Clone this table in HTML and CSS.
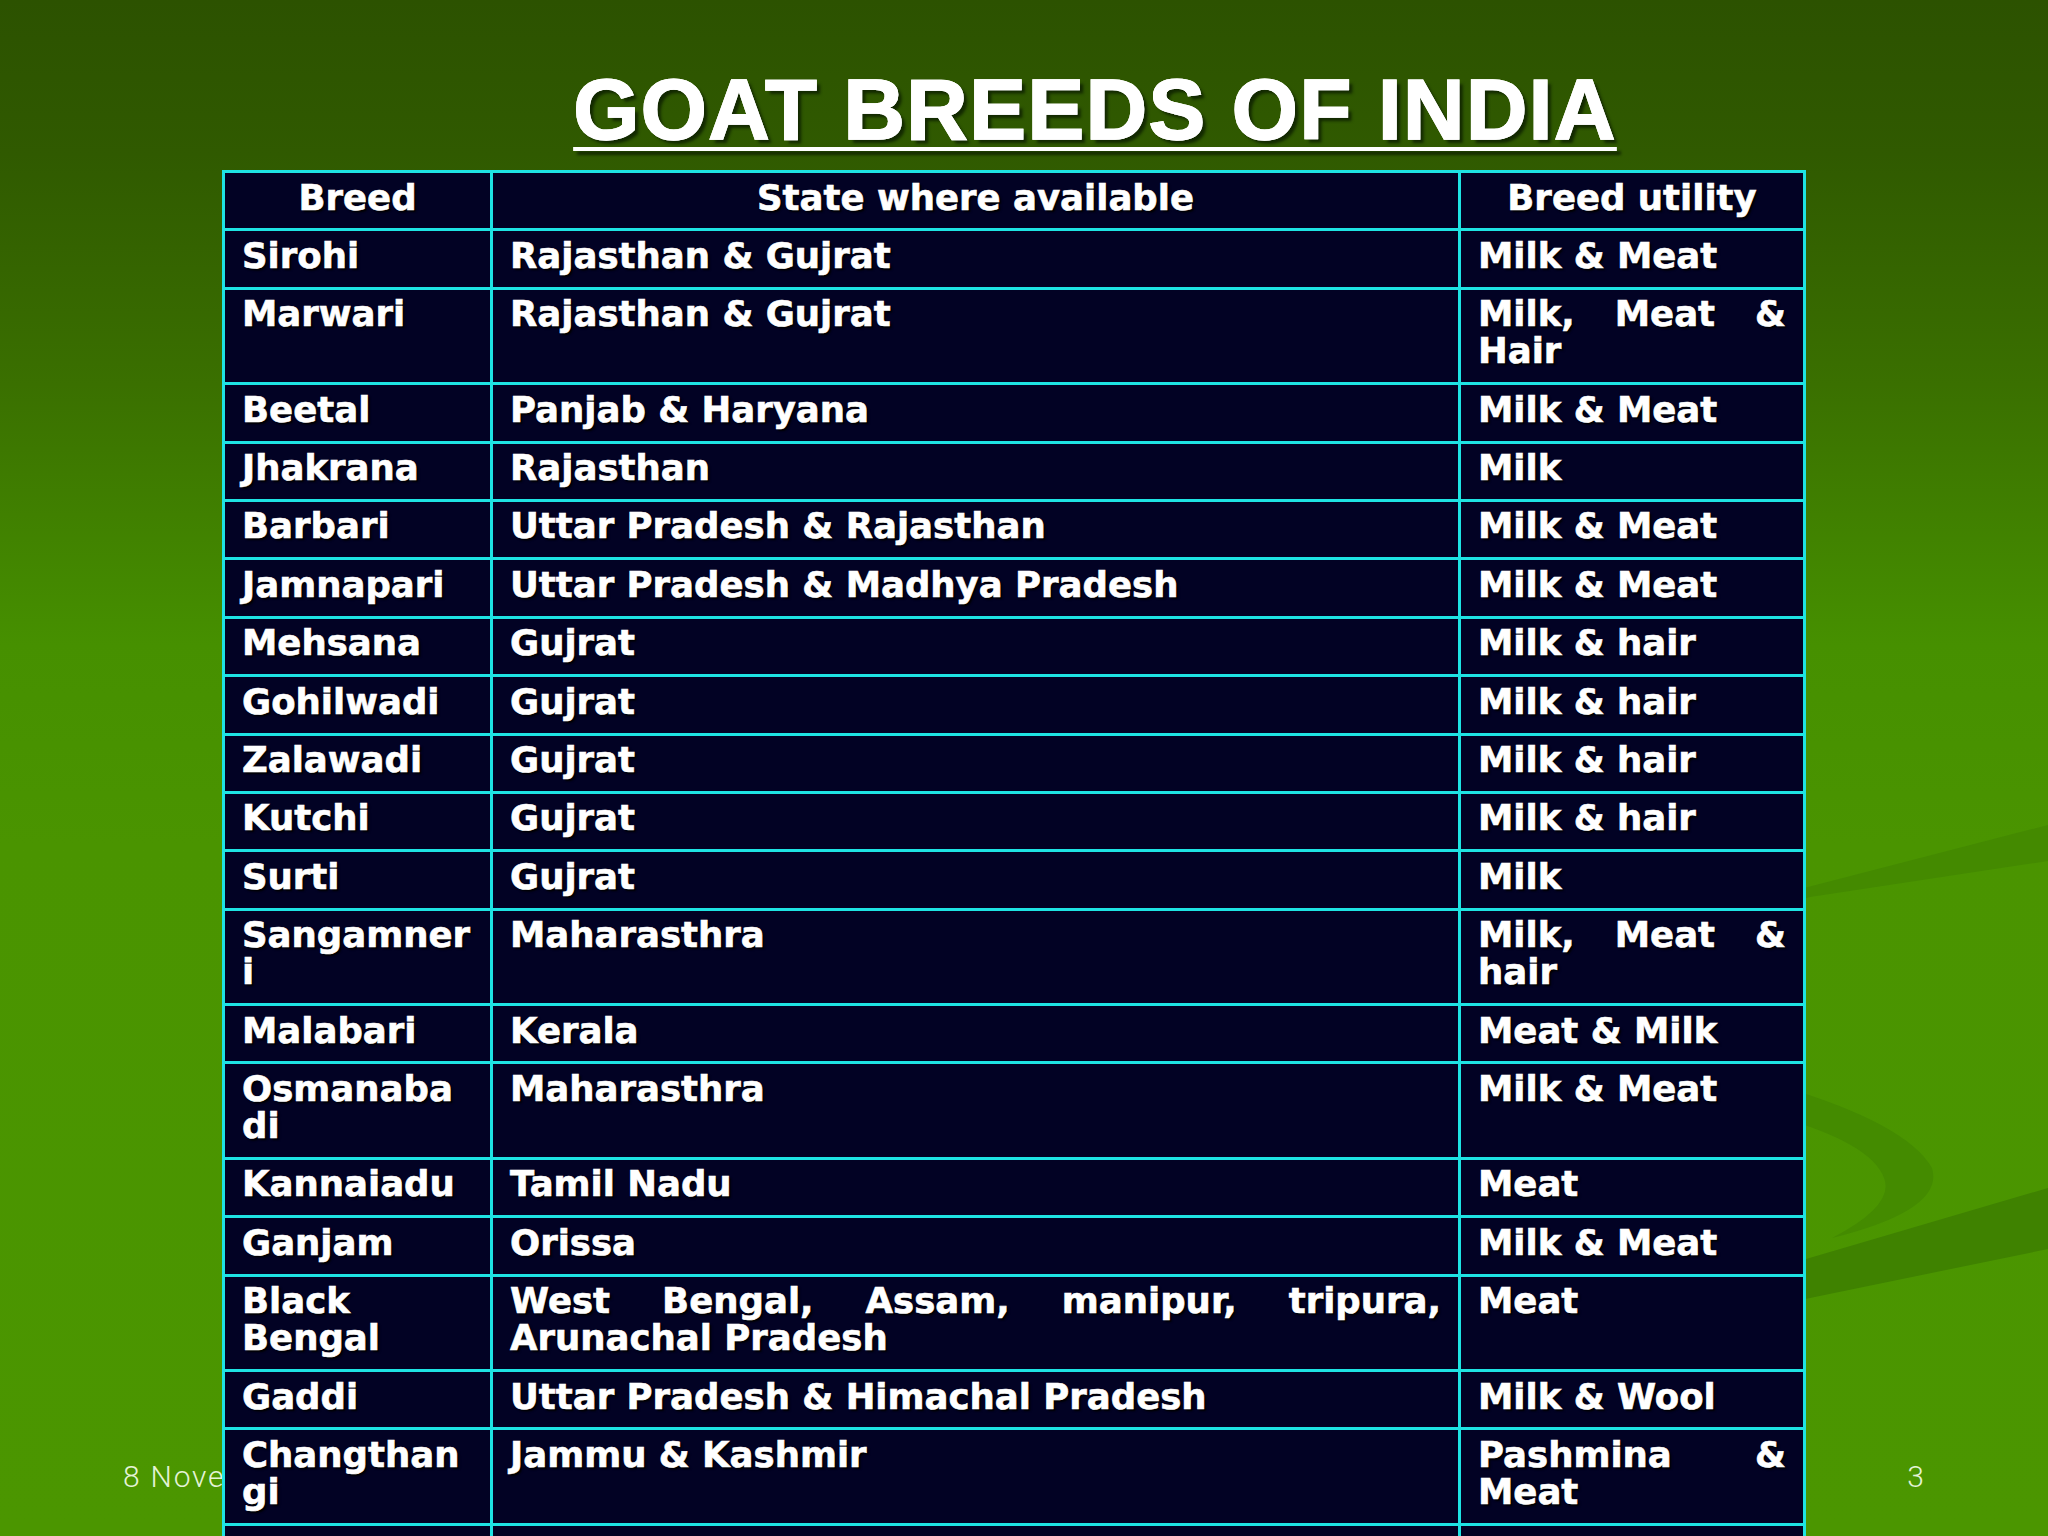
FILE: index.html
```html
<!DOCTYPE html>
<html lang="en">
<head>
<meta charset="utf-8">
<title>Goat Breeds of India</title>
<link rel="stylesheet" href="styles.css">
</head>
<body>
<div class="slide">
  <svg class="swoosh" viewBox="0 0 2048 1536" width="2048" height="1536" aria-hidden="true">
    <path class="sw1" d="M1700 915 L2048 825 L2048 861 L1810 897 L1700 930 Z"/>
    <path class="sw2" d="M1760 1080 Q1905 1120 1932 1168 Q1945 1210 1832 1238 Q1895 1205 1884 1178 Q1870 1140 1760 1112 Z"/>
    <path class="sw3" d="M1700 1290 L2048 1188 L2048 1249 L1810 1298 L1700 1322 Z"/>
  </svg>

  <h1 class="title"><span>GOAT BREEDS OF INDIA</span></h1>

  <div class="content">
    <div class="breeds" role="table">
      <div class="row head" role="row">
        <div class="cell" role="columnheader">Breed</div>
        <div class="cell" role="columnheader">State where available</div>
        <div class="cell" role="columnheader">Breed utility</div>
      </div>
      <div class="row" role="row"><div class="cell">Sirohi</div><div class="cell">Rajasthan &amp; Gujrat</div><div class="cell">Milk &amp; Meat</div></div>
      <div class="row" role="row"><div class="cell">Marwari</div><div class="cell">Rajasthan &amp; Gujrat</div><div class="cell">Milk, Meat &amp; Hair</div></div>
      <div class="row" role="row"><div class="cell">Beetal</div><div class="cell">Panjab &amp; Haryana</div><div class="cell">Milk &amp; Meat</div></div>
      <div class="row" role="row"><div class="cell">Jhakrana</div><div class="cell">Rajasthan</div><div class="cell">Milk</div></div>
      <div class="row" role="row"><div class="cell">Barbari</div><div class="cell">Uttar Pradesh &amp; Rajasthan</div><div class="cell">Milk &amp; Meat</div></div>
      <div class="row" role="row"><div class="cell">Jamnapari</div><div class="cell">Uttar Pradesh &amp; Madhya Pradesh</div><div class="cell">Milk &amp; Meat</div></div>
      <div class="row" role="row"><div class="cell">Mehsana</div><div class="cell">Gujrat</div><div class="cell">Milk &amp; hair</div></div>
      <div class="row" role="row"><div class="cell">Gohilwadi</div><div class="cell">Gujrat</div><div class="cell">Milk &amp; hair</div></div>
      <div class="row" role="row"><div class="cell">Zalawadi</div><div class="cell">Gujrat</div><div class="cell">Milk &amp; hair</div></div>
      <div class="row" role="row"><div class="cell">Kutchi</div><div class="cell">Gujrat</div><div class="cell">Milk &amp; hair</div></div>
      <div class="row" role="row"><div class="cell">Surti</div><div class="cell">Gujrat</div><div class="cell">Milk</div></div>
      <div class="row" role="row"><div class="cell">Sangamneri</div><div class="cell">Maharasthra</div><div class="cell">Milk, Meat &amp; hair</div></div>
      <div class="row" role="row"><div class="cell">Malabari</div><div class="cell">Kerala</div><div class="cell">Meat &amp; Milk</div></div>
      <div class="row" role="row"><div class="cell">Osmanabadi</div><div class="cell">Maharasthra</div><div class="cell">Milk &amp; Meat</div></div>
      <div class="row" role="row"><div class="cell">Kannaiadu</div><div class="cell">Tamil Nadu</div><div class="cell">Meat</div></div>
      <div class="row" role="row"><div class="cell">Ganjam</div><div class="cell">Orissa</div><div class="cell">Milk &amp; Meat</div></div>
      <div class="row" role="row"><div class="cell">Black Bengal</div><div class="cell">West Bengal, Assam, manipur, tripura, Arunachal Pradesh</div><div class="cell">Meat</div></div>
      <div class="row" role="row"><div class="cell">Gaddi</div><div class="cell">Uttar Pradesh &amp; Himachal Pradesh</div><div class="cell">Milk &amp; Wool</div></div>
      <div class="row" role="row"><div class="cell">Changthangi</div><div class="cell">Jammu &amp; Kashmir</div><div class="cell">Pashmina &amp; Meat</div></div>
      <div class="row" role="row"><div class="cell">&nbsp;</div><div class="cell">&nbsp;</div><div class="cell">&nbsp;</div></div>
    </div>
  </div>

  <div class="footer">
    <span class="date">8 November</span>
    <span class="num">3</span>
  </div>
</div>
</body>
</html>
```

FILE: styles.css
```css
html, body {
  margin: 0;
  padding: 0;
}

body {
  width: 2048px;
  height: 1536px;
  overflow: hidden;
  background: #4a9400;
}

.slide {
  position: relative;
  width: 2048px;
  height: 1536px;
  overflow: hidden;
  background: linear-gradient(180deg, #2c5200 0%, #305a00 10%, #3a7000 25%, #469000 42%, #4a9400 55%, #4b9600 100%);
}

.swoosh {
  position: absolute;
  left: 0;
  top: 0;
  z-index: 0;
}

.sw1 { fill: #448a00; }
.sw2 { fill: #448b00; }
.sw3 { fill: #3f8200; }

.title {
  position: relative;
  z-index: 1;
  margin: 0;
  padding: 67px 0 0 142px;
  height: 85px;
  text-align: center;
  font-family: "Liberation Sans", Arial, sans-serif;
  font-weight: 700;
  font-size: 85px;
  line-height: 85px;
  letter-spacing: 1.5px;
  color: #ffffff;
  -webkit-text-stroke: 1.5px #ffffff;
  text-shadow: 4px 4px 3px rgba(10, 25, 0, 0.75);
}

.title span {
  text-decoration: underline;
  text-decoration-thickness: 4px;
  text-underline-offset: 8px;
}

.content {
  position: relative;
  z-index: 2;
  margin-top: 18px;
  padding-left: 222px;
}

.breeds {
  display: grid;
  grid-template-columns: 268px 968px 345px;
  width: max-content;
  border-top: 3px solid #1ee3e3;
  border-left: 3px solid #1ee3e3;
  background: #020224;
  font-family: "DejaVu Sans", Verdana, sans-serif;
  font-weight: 700;
  font-size: 35.5px;
  line-height: 37px;
  color: #ffffff;
}

.row {
  display: contents;
}

.cell {
  border-right: 3px solid #1ee3e3;
  border-bottom: 3px solid #1ee3e3;
  padding: 5.5px 17px 12.9px 17px;
  text-align: justify;
  overflow-wrap: anywhere;
  -webkit-text-stroke: 0.6px #ffffff;
  text-shadow: 2px 2px 2px #000000;
}

.head .cell {
  text-align: center;
}

.footer {
  position: absolute;
  left: 0;
  right: 0;
  top: 1462px;
  z-index: 1;
  display: flex;
  justify-content: space-between;
  padding: 0 124px 0 123px;
  font-family: Roboto, "Liberation Sans", sans-serif;
  font-weight: 300;
  font-size: 30px;
  line-height: 30px;
  color: #e4f3d6;
}

.date {
  display: block;
  max-width: 99px;
  overflow: hidden;
  white-space: nowrap;
  letter-spacing: 1.8px;
}
```
